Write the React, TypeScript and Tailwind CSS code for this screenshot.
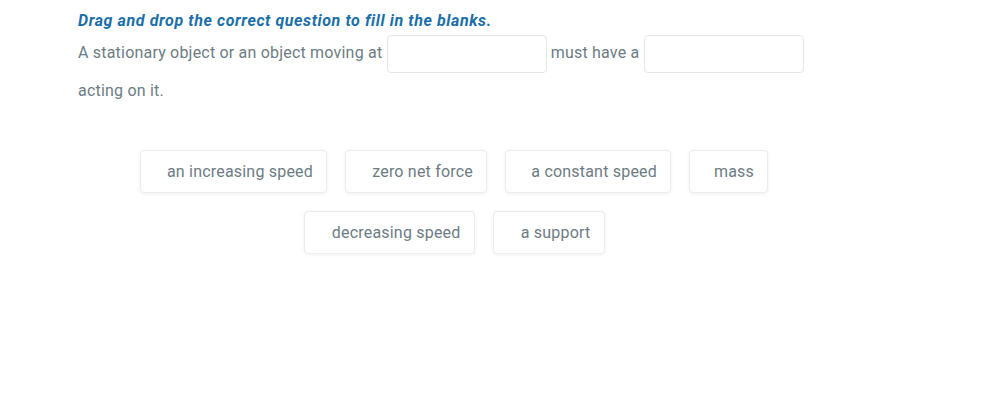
import React from 'react';

const options = [
  { label: 'an increasing speed', width: 'w-[187px]' },
  { label: 'zero net force', width: 'w-[142px]' },
  { label: 'a constant speed', width: 'w-[166px]' },
  { label: 'mass', width: 'w-[79px]' },
  { label: 'decreasing speed', width: 'w-[171px]' },
  { label: 'a support', width: 'w-[112px]' },
];

const Blank: React.FC = () => (
  <span className="inline-block align-middle w-[160px] h-[38px] border border-[#e6e6e6] rounded-[4px] bg-white" />
);

const App: React.FC = () => {
  return (
    <div className="w-[984px] h-[413px] bg-white font-['Roboto',sans-serif] text-[16px]">
      <div className="pl-[78px] pt-[10px] w-[830px]">
        <h1 className="text-[16px] leading-[22px] font-bold italic tracking-[0.6px] text-[#1b6fa8]">
          Drag and drop the correct question to fill in the blanks.
        </h1>
        <p className="mt-[3px] leading-[36px] tracking-[0.2px] text-[#6d7c84]">
          A stationary object or an object moving at <Blank /> must have a <Blank />
          <br />
          acting on it.
        </p>

        <div className="mt-[41px] flex flex-wrap justify-center gap-[18px]">
          {options.map(o => (
            <div
              key={o.label}
              className={`${o.width} h-[43px] flex items-center justify-end pr-[13px] bg-white border border-[#ececec] rounded-[4px] shadow-[0_1px_4px_rgba(0,0,0,0.06)] tracking-[0.2px] text-[#6d7c84] whitespace-nowrap`}
            >
              {o.label}
            </div>
          ))}
        </div>
      </div>
    </div>
  );
};

export default App;
